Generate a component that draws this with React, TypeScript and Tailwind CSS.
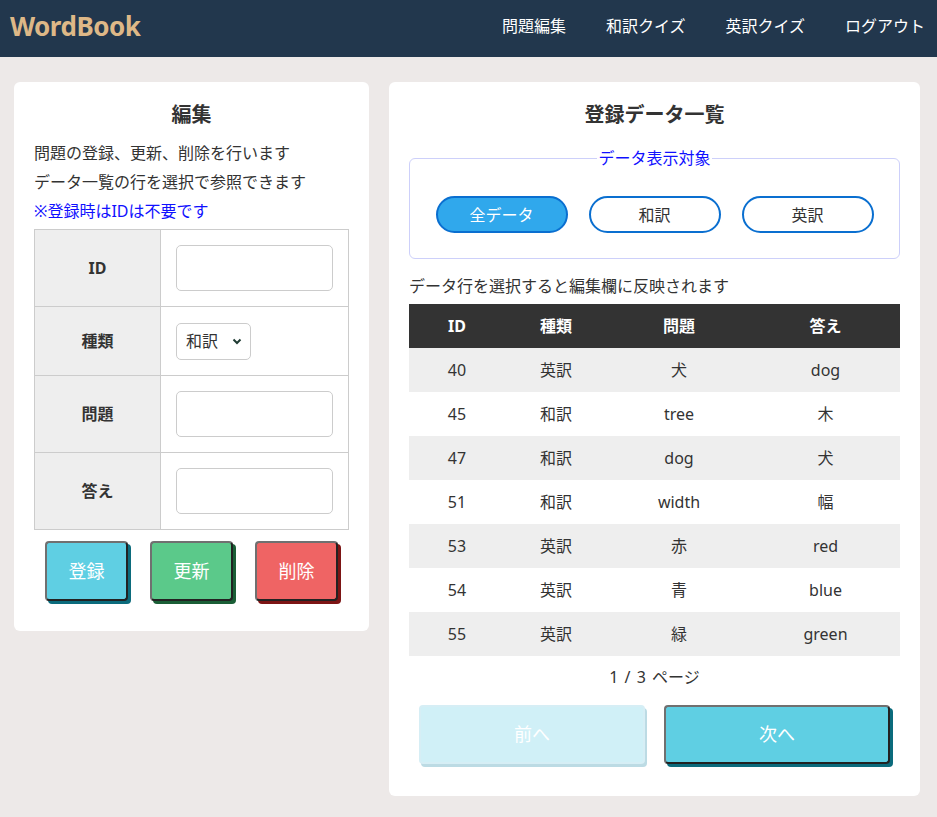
import { useState } from "react";

const rows = [
  { id: 40, kind: "英訳", q: "犬", a: "dog" },
  { id: 45, kind: "和訳", q: "tree", a: "木" },
  { id: 47, kind: "和訳", q: "dog", a: "犬" },
  { id: 51, kind: "和訳", q: "width", a: "幅" },
  { id: 53, kind: "英訳", q: "赤", a: "red" },
  { id: 54, kind: "英訳", q: "青", a: "blue" },
  { id: 55, kind: "英訳", q: "緑", a: "green" },
];

const font = "font-['Noto_Sans','Noto_Sans_CJK_JP',sans-serif]";

function EditRow({ label, tall = true, children }: { label: string; tall?: boolean; children: React.ReactNode }) {
  return (
    <tr>
      <th className={`w-[126px] border border-[#ccc] bg-[#eee] text-[16px] font-bold text-[#333] ${tall ? "h-[77px]" : "h-[69px]"}`}>
        {label}
      </th>
      <td className="border border-[#ccc] px-[15px]">{children}</td>
    </tr>
  );
}

function TextBox() {
  return <input type="text" className="h-[46px] w-[157px] rounded-[5px] border border-[#ccc] bg-white px-2 outline-none" />;
}

export default function App() {
  const [target, setTarget] = useState("all");

  const pill = (key: string, label: string) => (
    <button
      onClick={() => setTarget(key)}
      className={cn(
        "h-[37px] w-[132px] rounded-full border-2 border-[#0a6fd0] text-[16px]",
        target === key ? "bg-[#30a8ec] text-white" : "bg-white text-[#333]"
      )}
    >
      {label}
    </button>
  );

  return (
    <div className={`min-h-[817px] bg-[#ede9e8] text-[#333] ${font}`}>
      {/* header */}
      <header className="flex h-[57px] items-center justify-between bg-[#22374d] pb-[5px] pl-[10px] pr-[12px]">
        <div className="text-[26px] font-bold tracking-[-0.5px] text-[#deb887]">WordBook</div>
        <nav className="flex gap-[40px] text-[16px] text-white">
          <a>問題編集</a>
          <a>和訳クイズ</a>
          <a>英訳クイズ</a>
          <a>ログアウト</a>
        </nav>
      </header>

      <main className="flex items-start gap-[20px] pl-[14px] pr-[17px] pt-[25px]">
        {/* edit panel */}
        <section className="w-[355px] rounded-[6px] bg-white px-[20px] pb-[30px] pt-[19px]">
          <h2 className="text-center text-[20px] font-bold leading-[28px]">編集</h2>
          <div className="mt-[10px] text-[16px] leading-[29px]">
            <p>問題の登録、更新、削除を行います</p>
            <p>データ一覧の行を選択で参照できます</p>
            <p className="text-[#1010ff]">※登録時はIDは不要です</p>
          </div>
          <table className="mt-[3px] w-[315px] border-collapse">
            <tbody>
              <EditRow label="ID">
                <TextBox />
              </EditRow>
              <EditRow label="種類" tall={false}>
                <div className="relative w-[75px]">
                  <select className="h-[37px] w-[75px] appearance-none rounded-[5px] border border-[#ccc] bg-white pl-[9px] text-[16px] text-[#333] outline-none">
                    <option>和訳</option>
                    <option>英訳</option>
                  </select>
                  <svg className="pointer-events-none absolute right-[9px] top-[15px]" width="10" height="7" viewBox="0 0 10 7">
                    <path d="M1.5 1.5 5 5l3.5-3.5" fill="none" stroke="#1f3b33" strokeWidth="2" />
                  </svg>
                </div>
              </EditRow>
              <EditRow label="問題">
                <TextBox />
              </EditRow>
              <EditRow label="答え">
                <TextBox />
              </EditRow>
            </tbody>
          </table>
          <div className="mt-[11px] flex justify-around">
            <button className="h-[60px] w-[83px] rounded-[4px] border-2 border-[#707070] border-b-[#222] border-r-[#222] bg-[#5fcfe3] text-[18px] text-white shadow-[3px_3px_0_#0b6b7c]">
              登録
            </button>
            <button className="h-[60px] w-[83px] rounded-[4px] border-2 border-[#707070] border-b-[#222] border-r-[#222] bg-[#5bc98a] text-[18px] text-white shadow-[3px_3px_0_#1a5e36]">
              更新
            </button>
            <button className="h-[60px] w-[83px] rounded-[4px] border-2 border-[#707070] border-b-[#222] border-r-[#222] bg-[#ef6464] text-[18px] text-white shadow-[3px_3px_0_#7c1414]">
              削除
            </button>
          </div>
        </section>

        {/* list panel */}
        <section className="flex-1 rounded-[6px] bg-white px-[20px] pb-[32px] pt-[19px]">
          <h2 className="text-center text-[20px] font-bold leading-[28px]">登録データ一覧</h2>
          <fieldset className="mt-[17px] rounded-[6px] border border-[#cdd0fa] px-0 pb-[25px] pt-[26px]">
            <legend className="mx-auto px-[1px] text-[16px] leading-[24px] text-[#1010ff]">データ表示対象</legend>
            <div className="flex justify-center gap-[21px]">
              {pill("all", "全データ")}
              {pill("ja", "和訳")}
              {pill("en", "英訳")}
            </div>
          </fieldset>
          <p className="mt-[15px] text-[16px] leading-[24px]">データ行を選択すると編集欄に反映されます</p>
          <table className="mt-[6px] w-full border-collapse text-center text-[16px]">
            <thead>
              <tr className="h-[44px] bg-[#333] text-white">
                <th className="w-[96px]">ID</th>
                <th className="w-[102px]">種類</th>
                <th className="w-[144px]">問題</th>
                <th>答え</th>
              </tr>
            </thead>
            <tbody>
              {rows.map((r, i) => (
                <tr key={r.id} className={`h-[44px] cursor-pointer ${i % 2 === 0 ? "bg-[#eee]" : "bg-white"}`}>
                  <td>{r.id}</td>
                  <td>{r.kind}</td>
                  <td>{r.q}</td>
                  <td>{r.a}</td>
                </tr>
              ))}
            </tbody>
          </table>
          <p className="mt-[9px] text-center text-[16px] leading-[24px] [word-spacing:2px]">1 / 3 ページ</p>
          <div className="mt-[16px] flex gap-[19px] px-[10px]">
            <button disabled className="h-[59px] flex-1 rounded-[4px] border-2 border-[#d6eef5] bg-[#d0f0f7] text-[18px] text-white shadow-[2px_3px_0_#bcdbe4]">
              前へ
            </button>
            <button className="h-[59px] flex-1 rounded-[4px] border-2 border-[#707070] border-b-[#222] border-r-[#222] bg-[#5fcfe3] text-[18px] text-white shadow-[3px_3px_0_#0b6b7c]">
              次へ
            </button>
          </div>
        </section>
      </main>
    </div>
  );
}

function cn(...c: (string | false | undefined)[]) {
  return c.filter(Boolean).join(" ");
}
